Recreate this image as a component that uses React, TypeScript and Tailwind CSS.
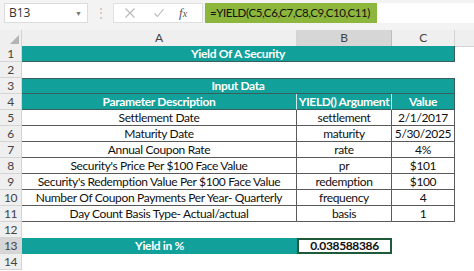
import React from 'react'

const font = { fontFamily: 'Lato, "Open Sans", sans-serif' }

const rows: [string, string, string][] = [
  ['Settlement Date', 'settlement', '2/1/2017'],
  ['Maturity Date', 'maturity', '5/30/2025'],
  ['Annual Coupon Rate', 'rate', '4%'],
  ["Security's Price Per $100 Face Value", 'pr', '$101'],
  ["Security's Redemption Value Per $100 Face Value", 'redemption', '$100'],
  ['Number Of Coupon Payments Per Year- Quarterly', 'frequency', '4'],
  ['Day Count Basis Type- Actual/actual', 'basis', '1'],
]

function RowNum({ n, active }: { n: number; active?: boolean }) {
  return (
    <div
      className={`flex items-center justify-center border-r border-b border-[#d4d4d4] text-[12px] text-[#444] ${
        active ? 'bg-[#d6d6d6]' : 'bg-[#efefef]'
      }`}
    >
      {n}
    </div>
  )
}

export default function App() {
  return (
    <div className="w-[474px] h-[271px] overflow-hidden bg-white text-black" style={font}>
      {/* formula bar */}
      <div className="h-[30px] bg-[#f3f3f3] flex items-start pt-[3px] pl-[4px]">
        <div className="w-[84px] h-[20px] bg-white border border-[#dcdcdc] flex items-center justify-between pl-[4px] pr-[5px]">
          <span className="text-[12px] text-[#333]" style={{ fontFamily: '"Open Sans", sans-serif' }}>B13</span>
          <span className="text-[7px] text-[#777]">▼</span>
        </div>
        <div className="w-[25px] h-[20px] flex items-center justify-center text-[#bbb] text-[12px]">⋮</div>
        <div className="w-[90px] h-[20px] bg-white border border-[#e0e0e0] flex items-center">
          <svg width="12" height="12" viewBox="0 0 12 12" className="ml-[10px]">
            <path d="M1.5 1.5 L10.5 10.5 M10.5 1.5 L1.5 10.5" stroke="#b8b8b8" strokeWidth="1.1" fill="none" />
          </svg>
          <svg width="12" height="12" viewBox="0 0 12 12" className="ml-[17px]">
            <path d="M1.5 6.5 L4.5 9.5 L10.5 2" stroke="#b8b8b8" strokeWidth="1.1" fill="none" />
          </svg>
          <span
            className="ml-[14px] text-[13px] italic text-[#555]"
            style={{ fontFamily: '"Liberation Serif", serif' }}
          >
            f<span className="text-[10px]">x</span>
          </span>
        </div>
        <div className="ml-[2px] w-[172px] h-[20px] bg-[#8db63c] flex items-center pl-[5px] text-[11.5px] text-[#111] tracking-[-0.4px] whitespace-nowrap overflow-hidden">
          =YIELD(C5,C6,C7,C8,C9,C10,C11)
        </div>
        <div className="flex-1 h-[20px] bg-white" />
      </div>

      {/* sheet */}
      <div className="grid grid-cols-[22px_275px_95px_63px_1fr] auto-rows-[16px] text-[12px] tracking-[-0.35px]">
        {/* column headers */}
        <div className="h-[17px] bg-[#efefef] border-r border-b border-[#d4d4d4] flex items-end justify-end p-[2px]">
          <div className="w-0 h-0 border-l-[9px] border-l-transparent border-b-[9px] border-b-[#b4b4b4]" />
        </div>
        <div className="h-[17px] bg-[#efefef] border-r border-b border-[#d4d4d4] flex items-center justify-center text-[#444]">A</div>
        <div className="h-[17px] bg-[#d6d6d6] border-r border-b border-[#bdbdbd] flex items-center justify-center text-[#444]">B</div>
        <div className="h-[17px] bg-[#efefef] border-r border-b border-[#d4d4d4] flex items-center justify-center text-[#444]">C</div>
        <div className="h-[17px] bg-[#efefef] border-b border-[#d4d4d4]" />

        {/* row 1 */}
        <RowNum n={1} />
        <div className="col-span-3 bg-[#11a09a] border-b border-[#3a5e5c] border-r flex items-center justify-center text-white font-bold">
          Yield Of A Security
        </div>
        <div />

        {/* row 2 */}
        <RowNum n={2} />
        <div className="col-span-4" />

        {/* row 3 */}
        <RowNum n={3} />
        <div className="col-span-3 bg-[#11a09a] border-t border-b border-r border-[#3a5e5c] flex items-center justify-center text-white font-bold">
          Input Data
        </div>
        <div />

        {/* row 4 */}
        <RowNum n={4} />
        <div className="bg-[#11a09a] border-r border-b border-r-[#cfe9e7] border-b-[#3a5e5c] flex items-center justify-center text-white font-bold">
          Parameter Description
        </div>
        <div className="bg-[#11a09a] border-r border-b border-r-[#cfe9e7] border-b-[#3a5e5c] flex items-center justify-center text-white font-bold">
          YIELD() Argument
        </div>
        <div className="bg-[#11a09a] border-r border-b border-[#3a5e5c] flex items-center justify-center text-white font-bold">
          Value
        </div>
        <div />

        {rows.map(([desc, arg, val], i) => (
          <React.Fragment key={arg}>
            <RowNum n={i + 5} />
            <div className="border-r border-b border-[#5a5a5a] flex items-center justify-center whitespace-nowrap text-[#111]">
              {desc}
            </div>
            <div className="border-r border-b border-[#5a5a5a] flex items-center justify-center text-[#111]">{arg}</div>
            <div className="border-r border-b border-[#5a5a5a] flex items-center justify-center text-[#111]">{val}</div>
            <div />
          </React.Fragment>
        ))}

        {/* row 12 */}
        <RowNum n={12} />
        <div className="col-span-4" />

        {/* row 13 */}
        <RowNum n={13} active />
        <div className="bg-[#11a09a] flex items-center justify-center text-white font-bold">Yield in %</div>
        <div className="border-2 border-[#1d5a3a] flex items-center justify-center font-bold text-[#111]">
          0.038588386
        </div>
        <div className="col-span-2" />

        {/* row 14 */}
        <RowNum n={14} />
        <div className="col-span-4" />
      </div>
    </div>
  )
}
